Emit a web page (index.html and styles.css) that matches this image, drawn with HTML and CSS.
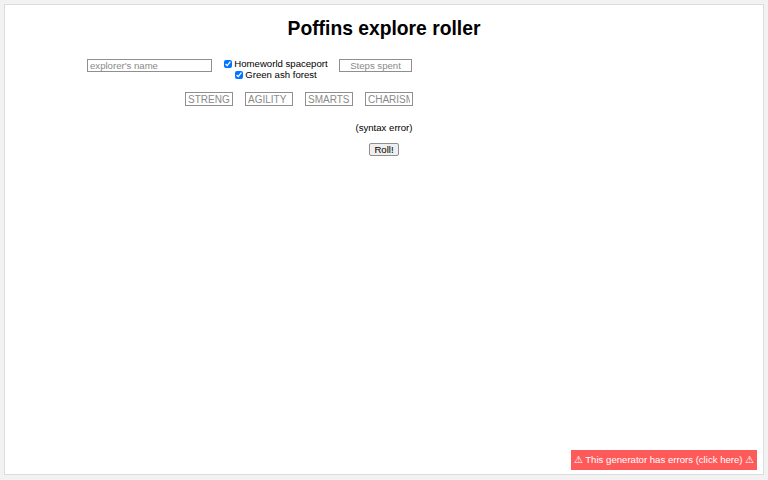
FILE: index.html
```html
<!DOCTYPE html>
<html lang="en">
<head>
    <meta charset="UTF-8">
    <meta name="viewport" content="width=device-width, initial-scale=1.0">
    <title>Poffins explore roller</title>
    <link rel="stylesheet" href="styles.css">
</head>
<body>

    <div class="card">
        <h1>Poffins explore roller</h1>

        <div class="form">
            <!-- Linha 1: nome, locais, passos -->
            <div class="row row-top">
                <input type="text" class="field name-field" placeholder="explorer's name">
                <div class="places">
                    <label><input type="checkbox" checked> Homeworld spaceport</label>
                    <label><input type="checkbox" checked> Green ash forest</label>
                </div>
                <input type="text" class="field steps-field" placeholder="Steps spent">
            </div>

            <!-- Linha 2: atributos -->
            <div class="row row-stats">
                <input type="text" class="field stat-field" placeholder="STRENGTH">
                <input type="text" class="field stat-field" placeholder="AGILITY">
                <input type="text" class="field stat-field" placeholder="SMARTS">
                <input type="text" class="field stat-field" placeholder="CHARISMA">
            </div>
        </div>

        <div class="output">(syntax error)</div>

        <div class="actions">
            <button class="roll-button">Roll!</button>
        </div>
    </div>

    <div class="error-badge">&#9888; This generator has errors (click here) &#9888;</div>

</body>
</html>
```

FILE: styles.css
```css
body {
    font-family: "Liberation Sans", Arial, sans-serif;
    font-size: 9.6px;
    background-color: #f2f2f2;
    margin: 0;
    padding: 4px;
    height: 100vh;
    box-sizing: border-box;
    overflow: hidden;
}

.card {
    background-color: #fff;
    border: 1px solid #dcdcdc;
    height: 471px;
    box-sizing: border-box;
    color: #000;
}

h1 {
    font-size: 19.3px;
    font-weight: bold;
    text-align: center;
    margin: 13px 0 0;
    line-height: 22px;
}

.form {
    width: 326px;
    margin: 18px 0 0 82px;
}

.row {
    display: flex;
    align-items: flex-start;
}

.row-top {
    gap: 12px;
}

.row-stats {
    justify-content: flex-end;
    gap: 12px;
    margin-top: 11px;
}

.field {
    font-family: "Liberation Sans", Arial, sans-serif;
    font-size: 9.6px;
    height: 13px;
    padding: 0 2px;
    border: 1px solid #8f8f8f;
    box-sizing: border-box;
    outline: none;
    margin: 1px 0 0;
}

.field::placeholder {
    color: #8a8a8a;
}

.name-field {
    width: 125px;
}

.steps-field {
    width: 73px;
    text-align: center;
    margin-left: -1px;
}

.stat-field {
    width: 48px;
    height: 14px;
    font-size: 10px;
}

.places {
    display: flex;
    flex-direction: column;
    align-items: center;
    width: 104px;
    line-height: 11px;
}

.places label {
    display: flex;
    align-items: center;
    white-space: nowrap;
}

.places input {
    width: 8px;
    height: 8px;
    margin: 0 2px 0 0;
}

.output {
    text-align: center;
    margin: 16px 0 0;
    line-height: 11px;
}

.actions {
    text-align: center;
    margin: 10px 0 0;
}

.roll-button {
    font-family: "Liberation Sans", Arial, sans-serif;
    font-size: 9.6px;
    height: 13px;
    width: 30px;
    padding: 0;
    border: 1px solid #8f8f8f;
    border-radius: 2px;
    background-color: #efefef;
    color: #000;
    cursor: pointer;
}

.error-badge {
    position: fixed;
    right: 11px;
    bottom: 10px;
    width: 186px;
    height: 20px;
    line-height: 20px;
    text-align: center;
    background-color: #ff5a5a;
    color: #fff;
    font-size: 9.6px;
    cursor: pointer;
}
```
